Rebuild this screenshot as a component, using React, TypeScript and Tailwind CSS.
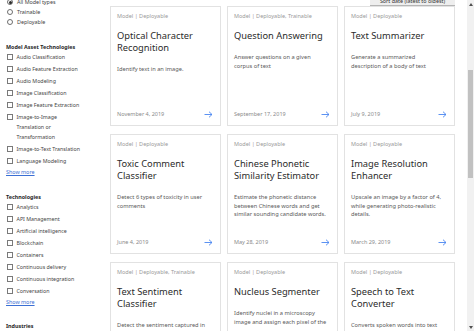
import React from "react";

const font = { fontFamily: '"Noto Sans", "Open Sans", Arial, sans-serif' };

type Card = {
  label: string;
  title: string[];
  desc: string[];
  date?: string;
};

const cards: Card[] = [
  { label: "Model | Deployable", title: ["Optical Character", "Recognition"], desc: ["Identify text in an image."], date: "November 4, 2019" },
  { label: "Model | Deployable, Trainable", title: ["Question Answering"], desc: ["Answer questions on a given", "corpus of text"], date: "September 17, 2019" },
  { label: "Model | Deployable", title: ["Text Summarizer"], desc: ["Generate a summarized", "description of a body of text"], date: "July 9, 2019" },
  { label: "Model | Deployable", title: ["Toxic Comment", "Classifier"], desc: ["Detect 6 types of toxicity in user", "comments"], date: "June 4, 2019" },
  { label: "Model | Deployable", title: ["Chinese Phonetic", "Similarity Estimator"], desc: ["Estimate the phonetic distance", "between Chinese words and get", "similar sounding candidate words."], date: "May 28, 2019" },
  { label: "Model | Deployable", title: ["Image Resolution", "Enhancer"], desc: ["Upscale an image by a factor of 4,", "while generating photo-realistic", "details."], date: "March 29, 2019" },
  { label: "Model | Deployable, Trainable", title: ["Text Sentiment", "Classifier"], desc: ["Detect the sentiment captured in", "short pieces of text"] },
  { label: "Model | Deployable", title: ["Nucleus Segmenter"], desc: ["Identify nuclei in a microscopy", "image and assign each pixel of the"] },
  { label: "Model | Deployable", title: ["Speech to Text", "Converter"], desc: ["Converts spoken words into text", "form."] },
];

function Arrow() {
  return (
    <svg width="9" height="7" viewBox="0 0 9 7" fill="none" stroke="#4a86f0" strokeWidth="0.9">
      <path d="M0.5 3.5 H8" />
      <path d="M5 0.7 L8 3.5 L5 6.3" />
    </svg>
  );
}

function CardView({ c }: { c: Card }) {
  return (
    <div className="h-[120px] border border-[#e2e2e2] bg-white flex flex-col px-[6px] pt-[5px] pb-[7px] overflow-hidden">
      <div className="text-[5.5px] leading-[8px] text-[#9a9a9a] whitespace-nowrap">{c.label}</div>
      <div className="mt-[10px] text-[9.3px] leading-[12px] text-[#2b2b2b] whitespace-nowrap">
        {c.title.map((t, i) => (
          <div key={i}>{t}</div>
        ))}
      </div>
      <div className="mt-[11px] text-[5.7px] leading-[8.7px] text-[#5a5a5a] whitespace-nowrap">
        {c.desc.map((t, i) => (
          <div key={i}>{t}</div>
        ))}
      </div>
      {c.date && (
        <div className="mt-auto flex items-center justify-between h-[8px]">
          <span className="text-[5.5px] leading-[8px] text-[#8a8a8a]">{c.date}</span>
          <span className="mr-[1px]">
            <Arrow />
          </span>
        </div>
      )}
    </div>
  );
}

function Radio({ label, checked }: { label: string; checked?: boolean }) {
  return (
    <div className="h-[10.5px] flex items-center">
      <span className="ml-[7px] w-[6px] h-[6px] rounded-full border border-[#6f6f6f] flex items-center justify-center bg-white">
        {checked && <span className="w-[3px] h-[3px] rounded-full bg-[#2b2b2b]" />}
      </span>
      <span className="ml-[4px] text-[5.4px] text-[#444444] whitespace-nowrap">{label}</span>
    </div>
  );
}

function Check({ lines }: { lines: string[] }) {
  return (
    <div className="flex items-start">
      <span className="ml-[7px] mt-[2px] w-[6px] h-[6px] border border-[#7a7a7a] bg-white shrink-0" />
      <div className="ml-[3.5px] text-[5.3px] leading-[10px] text-[#444444] whitespace-nowrap">
        {lines.map((l, i) => (
          <div key={i}>{l}</div>
        ))}
      </div>
    </div>
  );
}

function Heading({ children }: { children: React.ReactNode }) {
  return <div className="ml-[6px] text-[5.4px] leading-[9px] font-bold text-[#1f1f1f] whitespace-nowrap">{children}</div>;
}

function ShowMore() {
  return <div className="ml-[6px] mt-[1px] text-[5.4px] leading-[10px] text-[#3b6fd4] underline">Show more</div>;
}

export default function App() {
  return (
    <div className="w-[474px] h-[331px] overflow-hidden bg-white flex" style={font}>
      {/* Sidebar */}
      <div className="w-[110px] shrink-0 flex flex-col mt-[-3px]">
        <Radio label="All Model types" checked />
        <Radio label="Trainable" />
        <Radio label="Deployable" />
        <div className="mt-[15px]">
          <Heading>Model Asset Technologies</Heading>
        </div>
        <div className="flex flex-col gap-[2px]">
          <Check lines={["Audio Classification"]} />
          <Check lines={["Audio Feature Extraction"]} />
          <Check lines={["Audio Modeling"]} />
          <Check lines={["Image Classification"]} />
          <Check lines={["Image Feature Extraction"]} />
          <Check lines={["Image-to-Image", "Translation or", "Transformation"]} />
          <Check lines={["Image-to-Text Translation"]} />
          <Check lines={["Language Modeling"]} />
        </div>
        <ShowMore />
        <div className="mt-[16px]">
          <Heading>Technologies</Heading>
        </div>
        <div className="flex flex-col gap-[2px]">
          <Check lines={["Analytics"]} />
          <Check lines={["API Management"]} />
          <Check lines={["Artificial intelligence"]} />
          <Check lines={["Blockchain"]} />
          <Check lines={["Containers"]} />
          <Check lines={["Continuous delivery"]} />
          <Check lines={["Continuous integration"]} />
          <Check lines={["Conversation"]} />
        </div>
        <ShowMore />
        <div className="mt-[15.5px]">
          <Heading>Industries</Heading>
        </div>
      </div>

      {/* Main */}
      <div className="w-[346px] shrink-0 flex flex-col">
        <div className="h-[11px] flex justify-end">
          <div className="mt-[-4px] mr-[1px] w-[85px] h-[10px] bg-[#eeeeee] border-b border-[#b5b5b5] flex items-center justify-center">
            <span className="text-[5.4px] leading-[8px] text-[#333333] whitespace-nowrap">Sort date (latest to oldest)</span>
          </div>
        </div>
        <div className="grid grid-cols-[111px_111px_111px] gap-x-[6px] gap-y-[8px]">
          {cards.map((c, i) => (
            <CardView key={i} c={c} />
          ))}
        </div>
      </div>

      <div className="flex-1" />

      {/* Scrollbar */}
      <div className="w-[7px] shrink-0 h-full bg-[#f1f1f1] flex flex-col items-center">
        <div className="h-[8px] flex items-center justify-center">
          <svg width="4" height="3" viewBox="0 0 4 3">
            <path d="M2 0 L4 3 H0 Z" fill="#505050" />
          </svg>
        </div>
        <div className="mt-[62px] w-[5px] h-[108px] bg-[#c1c1c1]" />
        <div className="mt-auto h-[8px] flex items-center justify-center">
          <svg width="4" height="3" viewBox="0 0 4 3">
            <path d="M0 0 H4 L2 3 Z" fill="#505050" />
          </svg>
        </div>
      </div>
    </div>
  );
}
